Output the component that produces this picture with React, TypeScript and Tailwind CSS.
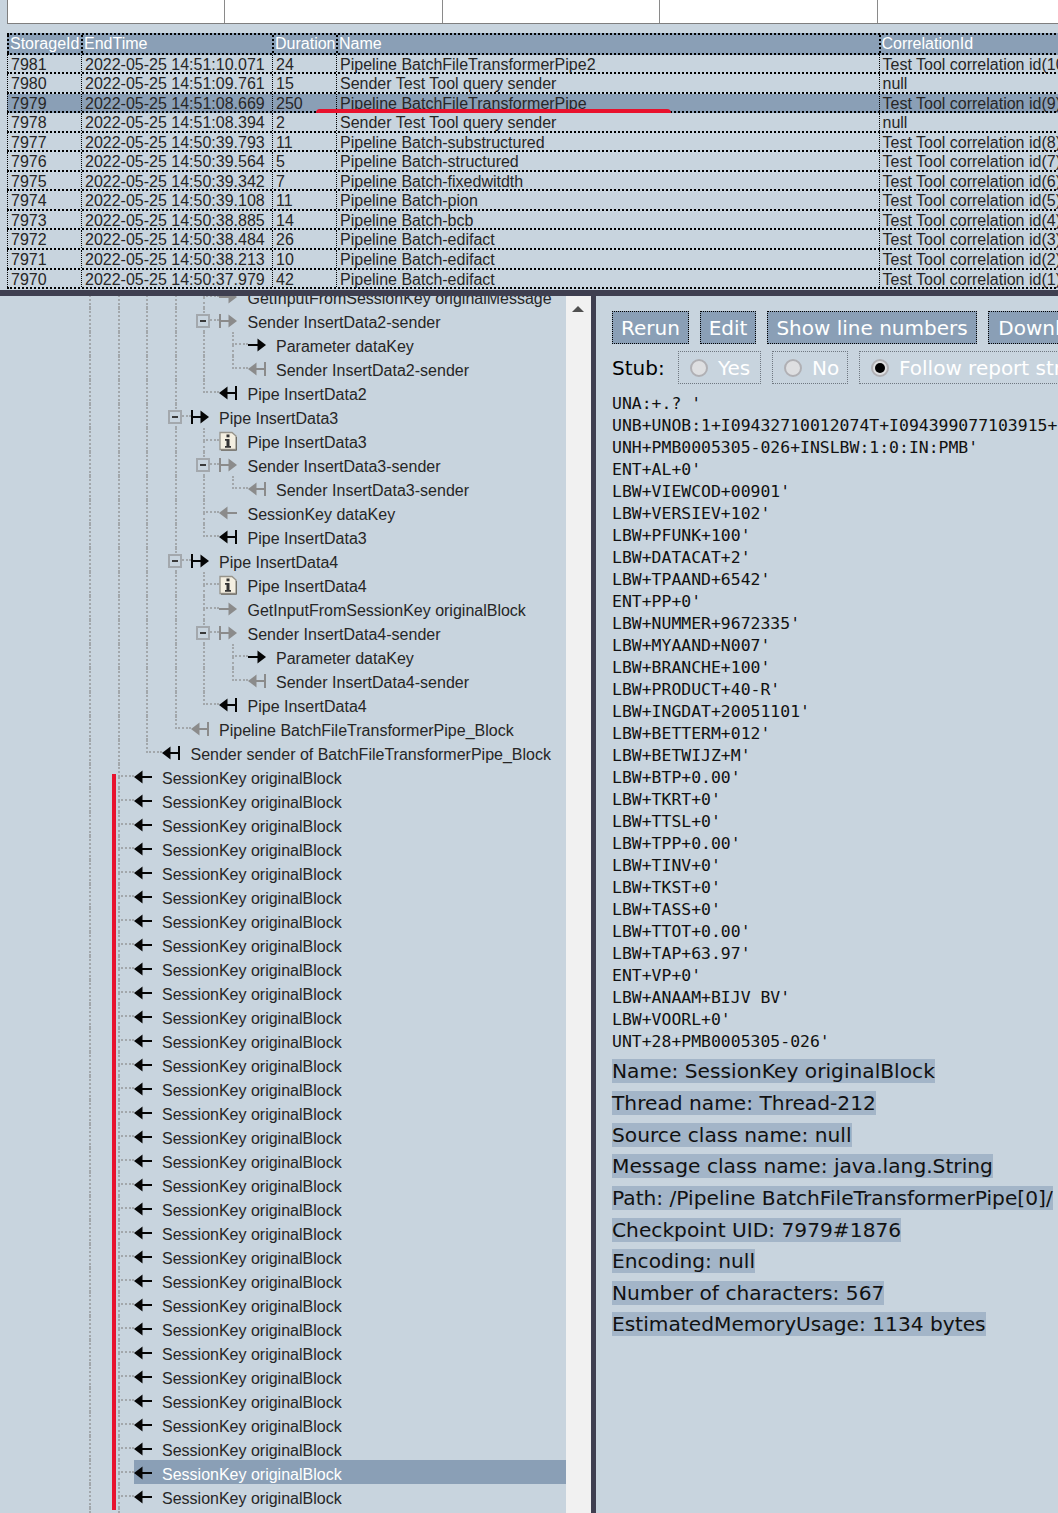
const sans = "font-['Liberation_Sans',Arial,sans-serif]"
const verdana = "font-['DejaVu_Sans',Verdana,sans-serif]"

const columns = [
  { title: 'StorageId', width: 'w-[74px]' },
  { title: 'EndTime', width: 'w-[191px]' },
  { title: 'Duration', width: 'w-[64px]' },
  { title: 'Name', width: 'w-[542.5px]' },
  { title: 'CorrelationId', width: 'w-[300px]' },
]

const reports = [
  ['7981', '2022-05-25 14:51:10.071', '24', 'Pipeline BatchFileTransformerPipe2', 'Test Tool correlation id(10)'],
  ['7980', '2022-05-25 14:51:09.761', '15', 'Sender Test Tool query sender', 'null'],
  ['7979', '2022-05-25 14:51:08.669', '250', 'Pipeline BatchFileTransformerPipe', 'Test Tool correlation id(9)'],
  ['7978', '2022-05-25 14:51:08.394', '2', 'Sender Test Tool query sender', 'null'],
  ['7977', '2022-05-25 14:50:39.793', '11', 'Pipeline Batch-substructured', 'Test Tool correlation id(8)'],
  ['7976', '2022-05-25 14:50:39.564', '5', 'Pipeline Batch-structured', 'Test Tool correlation id(7)'],
  ['7975', '2022-05-25 14:50:39.342', '7', 'Pipeline Batch-fixedwitdth', 'Test Tool correlation id(6)'],
  ['7974', '2022-05-25 14:50:39.108', '11', 'Pipeline Batch-pion', 'Test Tool correlation id(5)'],
  ['7973', '2022-05-25 14:50:38.885', '14', 'Pipeline Batch-bcb', 'Test Tool correlation id(4)'],
  ['7972', '2022-05-25 14:50:38.484', '26', 'Pipeline Batch-edifact', 'Test Tool correlation id(3)'],
  ['7971', '2022-05-25 14:50:38.213', '10', 'Pipeline Batch-edifact', 'Test Tool correlation id(2)'],
  ['7970', '2022-05-25 14:50:37.979', '42', 'Pipeline Batch-edifact', 'Test Tool correlation id(1)'],
]

type IconName = 'in' | 'out' | 'right' | 'left' | 'info'

type TreeRow = {
  level: number
  label: string
  icon: IconName
  gray?: boolean
  toggle?: boolean
  last?: boolean
  selected?: boolean
}

const treeRows: TreeRow[] = [
  { level: 3, label: 'GetInputFromSessionKey originalMessage', icon: 'right', gray: true },
  { level: 3, label: 'Sender InsertData2-sender', icon: 'in', gray: true, toggle: true },
  { level: 4, label: 'Parameter dataKey', icon: 'right' },
  { level: 4, label: 'Sender InsertData2-sender', icon: 'out', gray: true, last: true },
  { level: 3, label: 'Pipe InsertData2', icon: 'out', last: true },
  { level: 2, label: 'Pipe InsertData3', icon: 'in', toggle: true },
  { level: 3, label: 'Pipe InsertData3', icon: 'info' },
  { level: 3, label: 'Sender InsertData3-sender', icon: 'in', gray: true, toggle: true },
  { level: 4, label: 'Sender InsertData3-sender', icon: 'out', gray: true, last: true },
  { level: 3, label: 'SessionKey dataKey', icon: 'left', gray: true },
  { level: 3, label: 'Pipe InsertData3', icon: 'out', last: true },
  { level: 2, label: 'Pipe InsertData4', icon: 'in', toggle: true },
  { level: 3, label: 'Pipe InsertData4', icon: 'info' },
  { level: 3, label: 'GetInputFromSessionKey originalBlock', icon: 'right', gray: true },
  { level: 3, label: 'Sender InsertData4-sender', icon: 'in', gray: true, toggle: true },
  { level: 4, label: 'Parameter dataKey', icon: 'right' },
  { level: 4, label: 'Sender InsertData4-sender', icon: 'out', gray: true, last: true },
  { level: 3, label: 'Pipe InsertData4', icon: 'out', last: true },
  { level: 2, label: 'Pipeline BatchFileTransformerPipe_Block', icon: 'out', gray: true, last: true },
  { level: 1, label: 'Sender sender of BatchFileTransformerPipe_Block', icon: 'out', last: true },
  ...Array.from({ length: 31 }, (_, i) => ({
    level: 0,
    label: 'SessionKey originalBlock',
    icon: 'left' as IconName,
    selected: i === 29,
  })),
]

const messageLines = [
  "UNA:+.? '",
  'UNB+UNOB:1+I09432710012074T+I094399077103915+',
  "UNH+PMB0005305-026+INSLBW:1:0:IN:PMB'",
  "ENT+AL+0'",
  "LBW+VIEWCOD+00901'",
  "LBW+VERSIEV+102'",
  "LBW+PFUNK+100'",
  "LBW+DATACAT+2'",
  "LBW+TPAAND+6542'",
  "ENT+PP+0'",
  "LBW+NUMMER+9672335'",
  "LBW+MYAAND+N007'",
  "LBW+BRANCHE+100'",
  "LBW+PRODUCT+40-R'",
  "LBW+INGDAT+20051101'",
  "LBW+BETTERM+012'",
  "LBW+BETWIJZ+M'",
  "LBW+BTP+0.00'",
  "LBW+TKRT+0'",
  "LBW+TTSL+0'",
  "LBW+TPP+0.00'",
  "LBW+TINV+0'",
  "LBW+TKST+0'",
  "LBW+TASS+0'",
  "LBW+TTOT+0.00'",
  "LBW+TAP+63.97'",
  "ENT+VP+0'",
  "LBW+ANAAM+BIJV BV'",
  "LBW+VOORL+0'",
  "UNT+28+PMB0005305-026'",
]

const checkpointInfo = [
  'Name: SessionKey originalBlock',
  'Thread name: Thread-212',
  'Source class name: null',
  'Message class name: java.lang.String',
  'Path: /Pipeline BatchFileTransformerPipe[0]/',
  'Checkpoint UID: 7979#1876',
  'Encoding: null',
  'Number of characters: 567',
  'EstimatedMemoryUsage: 1134 bytes',
]

function NodeIcon({ name, gray }: { name: IconName; gray?: boolean }) {
  if (name === 'info') {
    return (
      <svg width="18" height="20" viewBox="0 0 18 20" className="shrink-0">
        <path d="M1 1.500h12l4 3.500v13.500H1z" fill="#f4efe1" stroke="#96938a" strokeWidth="1.300" />
        <path d="M2 19.300h15.500V6" fill="none" stroke="#6f6c64" strokeWidth="1" />
        <rect x="7.500" y="3.500" width="3" height="2.800" fill="#333" />
        <path d="M6 8h4.500v7H12v1.800H6V15h1.500V9.800H6z" fill="#333" />
      </svg>
    )
  }
  const color = gray ? '#8b8b8b' : '#050505'
  return (
    <svg width="18" height="16" viewBox="0 0 18 16" className="shrink-0">
      {name === 'in' && (
        <>
          <path d="M1 1v14" stroke={color} strokeWidth="2" />
          <path d="M1 8h11" stroke={color} strokeWidth="2" />
          <path d="M9.500 1.500 18 8l-8.500 6.500z" fill={color} />
        </>
      )}
      {name === 'out' && (
        <>
          <path d="M17 1v14" stroke={color} strokeWidth="2" />
          <path d="M6 8h11" stroke={color} strokeWidth="2" />
          <path d="M8.500 1.500 0 8l8.500 6.500z" fill={color} />
        </>
      )}
      {name === 'right' && (
        <>
          <path d="M0 8h12" stroke={color} strokeWidth="2" />
          <path d="M9.500 1.500 18 8l-8.500 6.500z" fill={color} />
        </>
      )}
      {name === 'left' && (
        <>
          <path d="M6 8h12" stroke={color} strokeWidth="2" />
          <path d="M8.500 1.500 0 8l8.500 6.500z" fill={color} />
        </>
      )}
    </svg>
  )
}

function Tree() {
  return (
    <div className="-mt-[12px]">
      {treeRows.map((row, i) => (
        <div key={i} className="flex h-6 pl-[89px]">
          {Array.from({ length: row.level + 1 }, (_, g) => (
            <div key={g} className="w-[28.5px] shrink-0 border-l-2 border-dotted border-[#a2a7ab]" />
          ))}
          <div className="relative flex w-4 shrink-0 flex-col">
            <div className="h-[13px] border-b-2 border-l-2 border-dotted border-[#a2a7ab]" />
            {!row.last && <div className="flex-1 border-l-2 border-dotted border-[#a2a7ab]" />}
            {row.toggle && (
              <div className="absolute -left-[7px] top-[6px] flex h-[14px] w-[14px] items-center justify-center border-2 border-[#a3a8ad] bg-[#c8d4de]">
                <div className="h-[2px] w-[6px] bg-[#3a3a3a]" />
              </div>
            )}
          </div>
          <div
            className={`flex min-w-0 flex-1 items-center ${sans} text-[16px] whitespace-nowrap ${
              row.selected ? 'bg-[#8a9fb6] text-white' : 'text-[#262626]'
            }`}
          >
            <div className="flex w-[28.5px] shrink-0 pt-[2px]">
              <NodeIcon name={row.icon} gray={row.gray} />
            </div>
            <span className="pt-[6px]">{row.label}</span>
          </div>
        </div>
      ))}
      <div className="flex h-6 pl-[89px]">
        <div className="w-[28.5px] shrink-0 border-l-2 border-dotted border-[#a2a7ab]" />
        <div className="w-[28.5px] shrink-0 border-l-2 border-dotted border-[#a2a7ab]" />
      </div>
    </div>
  )
}

function ReportTable() {
  return (
    <div className={`${sans} text-[16px] w-[1180px]`}>
      <div className="flex h-[21.5px] border-y-2 border-dotted border-black bg-[#8a9fb6] text-white">
        {columns.map((col) => (
          <div
            key={col.title}
            className={`${col.width} shrink-0 border-l-2 border-dotted border-black pl-[1px] leading-[18px] whitespace-nowrap`}
          >
            {col.title}
          </div>
        ))}
      </div>
      {reports.map((report) => (
        <div
          key={report[0]}
          className={`flex h-[19.55px] border-b-2 border-dotted border-black text-[#262626] ${
            report[0] === '7979' ? 'bg-[#8a9fb6]' : ''
          }`}
        >
          {report.map((value, i) => (
            <div
              key={i}
              className={`${columns[i].width} shrink-0 border-l border-dotted border-black pl-[3px] leading-[20px] whitespace-nowrap`}
            >
              {value}
            </div>
          ))}
        </div>
      ))}
    </div>
  )
}

function ActionButton({ label, width }: { label: string; width: string }) {
  return (
    <div className={`${width} flex h-[33px] shrink-0 items-center justify-center border border-dotted border-black bg-[#8a9fb6] text-[20px] text-white whitespace-nowrap`}>
      {label}
    </div>
  )
}

function StubOption({ label, checked, width }: { label: string; checked?: boolean; width: string }) {
  return (
    <div className={`${width} flex h-[33px] shrink-0 items-center gap-[10px] border border-dotted border-[#6f7780] pl-[11px] text-[20px] text-white whitespace-nowrap`}>
      <span className="flex h-[18px] w-[18px] shrink-0 items-center justify-center rounded-full border-2 border-[#b0b0b4] bg-[#dedfe1]">
        {checked && <span className="h-[10px] w-[10px] rounded-full bg-black" />}
      </span>
      {label}
    </div>
  )
}

export default function App() {
  return (
    <div className="flex h-[1513px] w-[1058px] flex-col overflow-hidden bg-[#c8d4de]">
      <div className="h-[290px] shrink-0 overflow-hidden pl-[7px]">
        <div className="mb-[9px] flex h-6 w-[1200px] border-b border-l border-[#7f7f7f] bg-white">
          {[0, 1, 2, 3, 4].map((i) => (
            <div key={i} className="w-[217.4px] shrink-0 border-r border-[#8a8a8a]" />
          ))}
        </div>
        <div className="relative">
          <ReportTable />
          <div className="absolute left-[309px] top-[76px] h-1 w-[355px] rounded-t-sm bg-[#e8112d]" />
        </div>
      </div>
      <div className="h-[6px] shrink-0 bg-[#3f3f50]" />
      <div className="flex min-h-0 flex-1">
        <div className="relative w-[566px] shrink-0 overflow-hidden">
          <Tree />
          <div className="absolute left-[112px] top-[478px] h-[736px] w-1 bg-[#e8112d]" />
        </div>
        <div className="flex w-[25px] shrink-0 justify-center bg-[#f1f1f1] pt-[10px]">
          <div className="h-0 w-0 -translate-x-[1px] border-x-[6px] border-b-[6px] border-x-transparent border-b-[#505050]" />
        </div>
        <div className="w-[5px] shrink-0 bg-[#3f3f50]" />
        <div className={`min-w-0 flex-1 overflow-hidden pl-4 pt-[15px] ${verdana}`}>
          <div className="flex w-[600px] gap-[11px]">
            <ActionButton label="Rerun" width="w-[77px]" />
            <ActionButton label="Edit" width="w-[56px]" />
            <ActionButton label="Show line numbers" width="w-[210px]" />
            <ActionButton label="Download" width="w-[120px]" />
          </div>
          <div className="mt-[7px] flex w-[700px] items-center">
            <span className="w-[66px] shrink-0 text-[20px] text-black">Stub:</span>
            <StubOption label="Yes" width="w-[83px]" />
            <div className="w-[11px] shrink-0" />
            <StubOption label="No" width="w-[76px]" />
            <div className="w-[11px] shrink-0" />
            <StubOption label="Follow report strategy" checked width="w-[300px]" />
          </div>
          <div className="mt-[9px] font-['DejaVu_Sans_Mono',monospace] text-[16.45px] leading-[22px] whitespace-pre text-[#111]">
            {messageLines.map((line, i) => (
              <div key={i}>{line}</div>
            ))}
          </div>
          <div className="mt-[2.5px] text-[20.2px] whitespace-nowrap text-[#111]">
            {checkpointInfo.map((line, i) => (
              <div key={i} className="flex h-[31.65px] items-center">
                <span className="bg-[#a3b5c8] leading-[24px]">{line}</span>
              </div>
            ))}
          </div>
        </div>
      </div>
    </div>
  )
}
